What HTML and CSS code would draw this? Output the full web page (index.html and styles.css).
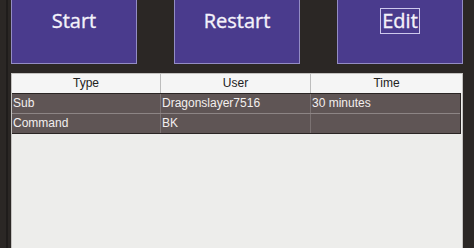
FILE: index.html
```html
<!DOCTYPE html>
<html>
<head>
<meta charset="utf-8">
<link rel="stylesheet" href="styles.css">
</head>
<body>
<div class="app">
  <div class="buttons">
    <div class="btn"><span class="label">Start</span></div>
    <div class="btn"><span class="label">Restart</span></div>
    <div class="btn"><span class="label focus">Edit</span></div>
  </div>
  <div class="table">
    <div class="row head">
      <div class="cell">Type</div>
      <div class="cell">User</div>
      <div class="cell">Time</div>
    </div>
    <div class="rows">
      <div class="row item">
        <div class="cell">Sub</div>
        <div class="cell">Dragonslayer7516</div>
        <div class="cell">30 minutes</div>
      </div>
      <div class="row item">
        <div class="cell">Command</div>
        <div class="cell">BK</div>
        <div class="cell"></div>
      </div>
    </div>
  </div>
</div>
</body>
</html>
```

FILE: styles.css
```css
html, body {
  margin: 0;
  padding: 0;
  width: 474px;
  height: 248px;
  overflow: hidden;
  background: #2b2725;
}

.app {
  height: 248px;
  padding: 0 11px;
  display: flex;
  flex-direction: column;
  gap: 9px;
  box-sizing: border-box;
  border-left: 3px solid #2b2725;
  box-shadow: inset 3px 0 0 #2b2725, inset 5px 0 0 #1f1c1b;
}

.buttons {
  display: grid;
  grid-template-columns: repeat(3, 1fr);
  gap: 37px;
  height: 64px;
  margin-left: -3px;
}

.btn {
  background: #4a3b8d;
  border: 1px solid #938cc4;
  border-top: none;
  box-sizing: border-box;
  display: flex;
  align-items: center;
  justify-content: center;
  padding-bottom: 21px;
  font-family: "Open Sans", "DejaVu Sans", sans-serif;
  font-size: 20px;
  color: #f4f2fa;
  -webkit-text-stroke: 0.35px #f4f2fa;
}

.label {
  line-height: 24px;
}

.focus {
  border: 1px solid #cdc8ec;
  padding: 0 1px;
  line-height: 24px;
}

.table {
  flex: 1;
  margin-left: -3px;
  background: #ededeb;
  border: 1px solid #c4c2c0;
  border-bottom: none;
  font-family: "Liberation Sans", Arial, sans-serif;
  font-size: 12px;
}

.row {
  display: grid;
  grid-template-columns: 149px 150px 1fr;
  height: 20px;
  box-sizing: border-box;
}

.head {
  height: 19px;
  background: #f5f5f5;
  color: #222222;
}

.head .cell {
  text-align: center;
  line-height: 19px;
  border-right: 1px solid #bdbdbd;
}

.head .cell:last-child {
  border-right: none;
}

.rows {
  border: 1px solid #2a2524;
  border-left: none;
  margin-right: 1px;
}

.item {
  height: 19px;
  background: #5f5555;
  color: #f3efee;
}

.item + .item {
  height: 20px;
  border-top: 1px solid #8d8585;
}

.item .cell {
  padding-left: 1px;
  line-height: 19px;
  border-right: 1px solid #7b7272;
  white-space: nowrap;
}

.item .cell:last-child {
  border-right: none;
}
```
